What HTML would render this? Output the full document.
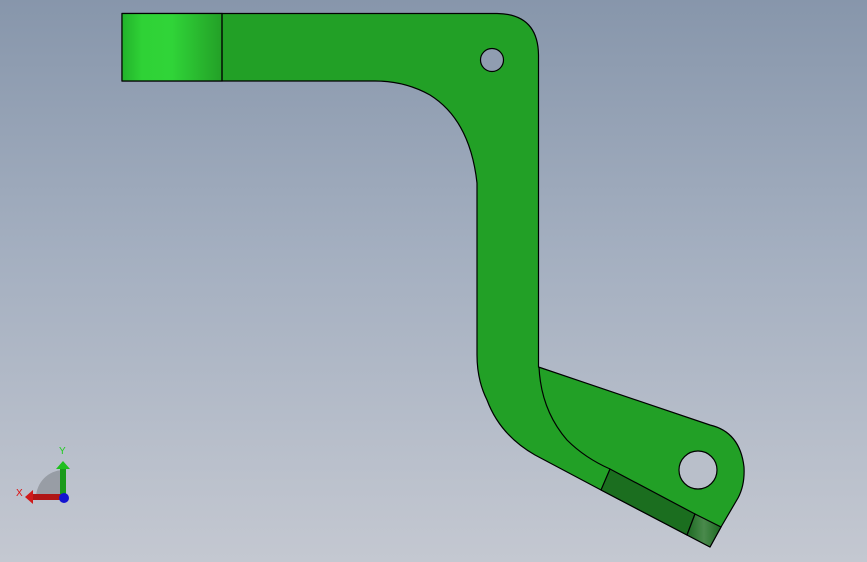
<!DOCTYPE html>
<html><head><meta charset="utf-8"><style>
html,body{margin:0;padding:0;}
body{width:867px;height:562px;overflow:hidden;background:linear-gradient(#8796ab 0%,#a4afc0 45%,#c4c8d1 100%);}
svg{display:block}
</style></head><body>
<svg width="867" height="562" viewBox="0 0 867 562" xmlns="http://www.w3.org/2000/svg">
<defs>
<linearGradient id="lg" x1="0" x2="1" y1="0" y2="0">
<stop offset="0" stop-color="#22b22b"/><stop offset="0.2" stop-color="#2fd236"/><stop offset="0.5" stop-color="#30d438"/><stop offset="1" stop-color="#23a027"/>
</linearGradient>
<linearGradient id="eg" x1="0" x2="1" y1="0" y2="0">
<stop offset="0" stop-color="#1d6a22"/><stop offset="0.5" stop-color="#4a8a4c"/><stop offset="1" stop-color="#1d6a22"/>
</linearGradient>
</defs>
<path d="M122,13.5 L497,13.5 Q538,14 538.5,55 L538.5,367 L710,425 Q740,432 744,467 Q745,485 738,498 L721,527 L710,547 L601,490 L535,455 Q500,435 487,400 Q477,380 477,355 L477,183 Q470,120 430,95 Q405,81 375,81 L122,81 Z" fill="#22a026" stroke="#000" stroke-width="1.2" stroke-linejoin="round"/>
<rect x="122" y="13.5" width="100" height="67.5" fill="url(#lg)" stroke="#000" stroke-width="1.2"/>
<line x1="222" y1="13.5" x2="222" y2="81" stroke="#000" stroke-width="1.2"/>
<circle cx="492" cy="60" r="11.5" fill="#909db1" stroke="#000" stroke-width="1.2"/>
<circle cx="698" cy="470" r="19" fill="#b9bfca" stroke="#000" stroke-width="1.2"/>
<path d="M539,367 Q541,410 567,440 Q585,458 610,469" fill="none" stroke="#000" stroke-width="1.2"/>
<path d="M610,469 L695,514 L687,535 L601,490 Z" fill="#1b6e1f" stroke="#000" stroke-width="1.2"/>
<path d="M695,514 L721,527 L710,547 L687,535 Z" fill="url(#eg)" stroke="#000" stroke-width="1.2"/>
<!-- triad -->
<path d="M63,470 A28,28 0 0 0 36,497 L63,497 Z" fill="#8e939b" opacity="0.8"/>
<rect x="60" y="468" width="6" height="30" fill="#1a9a1a"/>
<path d="M56,469 L63,461 L70,469 Z" fill="#1fbf1f"/>
<rect x="32" y="494" width="31" height="6" fill="#b01616"/>
<path d="M33,490 L25,497 L33,504 Z" fill="#d01a1a"/>
<circle cx="64" cy="498" r="5" fill="#1414d0"/>
<text x="59" y="454" font-family="Liberation Sans,sans-serif" font-size="10" fill="#22cc22">Y</text>
<text x="16" y="496" font-family="Liberation Sans,sans-serif" font-size="10" fill="#dd1111">X</text>
</svg>
</body></html>
